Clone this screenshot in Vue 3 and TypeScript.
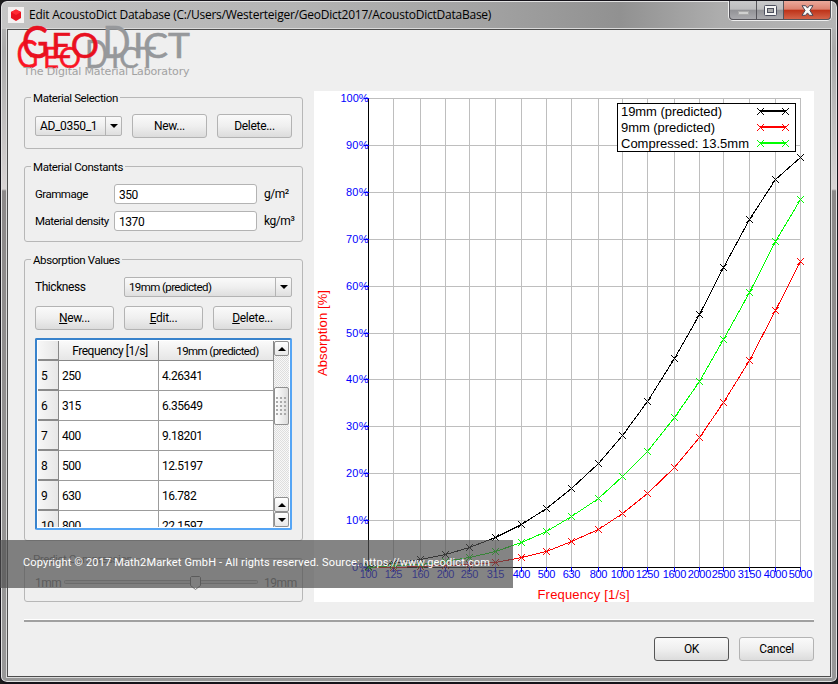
<script setup lang="ts">
interface Series {
  name: string
  color: string
  ys: number[]
}
interface Row {
  n: number
  freq: string
  value: string
}

const rows: Row[] = [
  { n: 5, freq: '250', value: '4.26341' },
  { n: 6, freq: '315', value: '6.35649' },
  { n: 7, freq: '400', value: '9.18201' },
  { n: 8, freq: '500', value: '12.5197' },
  { n: 9, freq: '630', value: '16.782' },
  { n: 10, freq: '800', value: '22.1597' },
]

const freqs = [100, 125, 160, 200, 250, 315, 400, 500, 630, 800, 1000, 1250, 1600, 2000, 2500, 3150, 4000, 5000]
const xs = [368, 393, 420, 445, 469, 495, 521, 546, 571, 598, 622, 647, 674, 699, 723, 749, 775, 800]
const gridYs = [98, 145, 192, 239, 286, 333, 379, 426, 473, 520, 567]

const series: Series[] = [
  {
    name: '19mm (predicted)',
    color: '#000000',
    ys: [566, 563, 559, 554, 547, 537, 524, 508, 488, 463, 435, 401, 358, 314, 267, 219, 179, 157],
  },
  {
    name: '9mm (predicted)',
    color: '#ff0000',
    ys: [567, 567, 566, 565, 564, 562, 557, 551, 541, 529, 513, 493, 467, 437, 402, 360, 310, 261],
  },
  {
    name: 'Compressed: 13.5mm',
    color: '#00ff00',
    ys: [567, 565, 564, 561, 557, 551, 542, 531, 516, 498, 476, 451, 417, 381, 339, 292, 241, 199],
  },
]
const legendWidths = [101, 94, 128]

const points = (s: Series): string => s.ys.map((y, i) => `${xs[i] + 0.5},${y + 0.5}`).join(' ')
const cross = (x: number, y: number): string =>
  `M${x - 3} ${y - 3}L${x + 4} ${y + 4}M${x + 4} ${y - 3}L${x - 3} ${y + 4}`
</script>

<template>
  <div class="window">
    <header class="titlebar">
      <svg class="app-icon" width="16" height="16" viewBox="0 0 16 16">
        <rect width="16" height="16" fill="#f4f1f1" />
        <path d="M8 2.5L13 5v6l-5 3-5-3V5z" fill="#e8121f" />
        <path d="M8 2.5L13 5 8 8 3 5z" fill="#ff2a33" />
      </svg>
      <span class="title">Edit AcoustoDict Database (C:/Users/Westerteiger/GeoDict2017/AcoustoDictDataBase)</span>
      <div class="controls">
        <span class="ctl min"><i></i></span>
        <span class="ctl max">
          <svg width="13" height="11" viewBox="0 0 13 11">
            <rect x="0.5" y="0.5" width="12" height="10" rx="1" fill="#f5f5f5" stroke="#4c4f5e" />
            <rect x="3.5" y="3.5" width="6" height="4" fill="#aaa" stroke="#4c4f5e" />
          </svg>
        </span>
        <span class="ctl close">
          <svg width="13" height="11" viewBox="0 0 13 11">
            <path d="M1 .7h3.6l1.9 2.4L8.400 .7H12L8.900 5.500 12 10.300H8.400L6.500 7.900 4.600 10.300H1L4.100 5.500z" fill="#fafafa" stroke="#4a4654" />
          </svg>
        </span>
      </div>
    </header>

    <main class="client">
      <svg class="logo" width="190" height="54" viewBox="8 24 190 54">
        <g stroke-width="0.4">
          <text x="16.500" y="68" font-size="38" textLength="22" lengthAdjust="spacingAndGlyphs" fill="#fb1424" stroke="#fb1424">G</text>
          <text x="43" y="68" font-size="29" textLength="38" lengthAdjust="spacingAndGlyphs" fill="#fb1424" stroke="#fb1424">EO</text>
          <text x="85" y="68" font-size="38" textLength="23" lengthAdjust="spacingAndGlyphs" fill="#96989b" stroke="#96989b">D</text>
          <text x="111" y="68" font-size="29" textLength="45" lengthAdjust="spacingAndGlyphs" fill="#96989b" stroke="#96989b">ICT</text>
        </g>
        <text x="23.500" y="75" font-size="11" textLength="166" fill="#a2a2a2" class="tagline">The Digital Material Laboratory</text>
        <g stroke-width="0.6">
          <text x="22" y="58" font-size="44" textLength="27" lengthAdjust="spacingAndGlyphs" fill="#e8101f" stroke="#e8101f">G</text>
          <text x="51" y="58" font-size="35" textLength="48" lengthAdjust="spacingAndGlyphs" fill="#e8101f" stroke="#e8101f">EO</text>
          <text x="102.500" y="58" font-size="44" textLength="28" lengthAdjust="spacingAndGlyphs" fill="#96989b" stroke="#96989b">D</text>
          <text x="133" y="58" font-size="35" textLength="57" lengthAdjust="spacingAndGlyphs" fill="#96989b" stroke="#96989b">ICT</text>
        </g>
      </svg>

      <div class="content">
        <div class="left">
          <section class="group selection">
            <h2>Material Selection</h2>
            <div class="line">
              <div class="combo small"><span>AD_0350_1</span><b><i></i></b></div>
              <button>New...</button>
              <button>Delete...</button>
            </div>
          </section>

          <section class="group constants">
            <h2>Material Constants</h2>
            <div class="field"><label>Grammage</label><div class="input">350</div><em>g/m²</em></div>
            <div class="field"><label>Material density</label><div class="input">1370</div><em>kg/m³</em></div>
          </section>

          <section class="group values">
            <h2>Absorption Values</h2>
            <div class="thick">
              <label>Thickness</label>
              <div class="combo wide"><span>19mm (predicted)</span><b><i></i></b></div>
            </div>
            <div class="line actions">
              <button><span><u>N</u>ew...</span></button>
              <button><span><u>E</u>dit...</span></button>
              <button><span><u>D</u>elete...</span></button>
            </div>
            <div class="table">
              <div class="grid">
                <div class="row head">
                  <span class="num"></span><span class="c1">Frequency [1/s]</span><span class="c2">19mm (predicted)</span>
                </div>
                <div v-for="r in rows" :key="r.n" class="row">
                  <span class="num">{{ r.n }}</span><span class="c1">{{ r.freq }}</span><span class="c2">{{ r.value }}</span>
                </div>
              </div>
              <div class="scroll">
                <span class="sb up"><i></i></span>
                <span class="track-a"></span>
                <span class="thumb"><i></i></span>
                <span class="track-b"></span>
                <span class="sb up"><i></i></span>
                <span class="sb down"><i></i></span>
              </div>
            </div>
          </section>

          <section class="group compression">
            <h2>Predict Compression</h2>
            <div class="slider">
              <span class="lo">1mm</span>
              <svg width="196" height="18" viewBox="0 0 196 18">
                <rect x="0.500" y="6.500" width="193" height="3" rx="1" fill="#ddd" stroke="#aaa" />
                <path d="M127.500 2.500h8l1 1v8l-5 4-5-4v-8z" fill="#eee" stroke="#777" />
              </svg>
              <span class="hi">19mm</span>
            </div>
          </section>
        </div>

        <svg class="chart" width="500" height="511" viewBox="314 91 500 511">
          <rect x="314" y="91" width="500" height="511" fill="#fff" />
          <g shape-rendering="crispEdges" fill="none" stroke="#bebebe">
            <path v-for="x in xs" :key="'x' + x" :d="`M${x + 0.5} 98V567`" />
            <path v-for="y in gridYs" :key="'y' + y" :d="`M368 ${y + 0.5}H801`" />
          </g>
          <g fill="#0000ff" font-size="11">
            <text v-for="(y, i) in gridYs" :key="'l' + y" x="368.500" :y="y + 4" text-anchor="end" :textLength="i === 0 ? 28 : i === 10 ? 16.500 : 22.500">{{ 100 - i * 10 }}%</text>
            <text v-for="(f, i) in freqs" :key="f" :x="xs[i] + 0.5" y="578" text-anchor="middle" :textLength="String(f).length * 6 - 0.5">{{ f }}</text>
          </g>
          <g shape-rendering="crispEdges" fill="none">
            <path d="M368.500 98V568M368 567.500H801" stroke="#000" />
            <path v-for="y in gridYs" :key="'t' + y" :d="`M364 ${y + 0.5}H369`" stroke="#00f" />
            <path v-for="x in xs" :key="'u' + x" :d="`M${x + 0.5} 567V572`" stroke="#00f" />
            <g v-for="s in series" :key="s.name" :stroke="s.color">
              <polyline :points="points(s)" />
              <path v-for="(y, i) in s.ys" :key="i" :d="cross(xs[i], y)" />
            </g>
            <rect x="617.500" y="103.500" width="178" height="48" fill="#fff" stroke="#000" />
            <g v-for="(s, i) in series" :key="'g' + i" :stroke="s.color">
              <path :d="`M760 ${111 + i * 16}H786`" stroke-width="2" />
              <path :d="cross(760, 111 + i * 16) + cross(785, 111 + i * 16)" />
            </g>
          </g>
          <g font-size="13" fill="#000">
            <text v-for="(s, i) in series" :key="'n' + i" x="621" :y="116 + i * 16" :textLength="legendWidths[i]">{{ s.name }}</text>
          </g>
          <text x="537.500" y="599" font-size="13" fill="#f00" textLength="92">Frequency [1/s]</text>
          <text transform="translate(327 376) rotate(-90)" font-size="13" fill="#f00" textLength="86">Absorption [%]</text>
        </svg>
      </div>

      <hr />
      <footer>
        <button class="default">OK</button>
        <button>Cancel</button>
      </footer>
    </main>

    <div class="watermark">Copyright © 2017 Math2Market GmbH - All rights reserved. Source: https://www.geodict.com</div>
  </div>
</template>

<style>
body { background: #1c1c1c; overflow: hidden; }
</style>

<style scoped>
* { box-sizing: border-box; }
.window {
  position: relative;
  width: 838px;
  height: 684px;
  padding: 0 6px 5px 5px;
  border: 1px solid #15131a;
  border-bottom-width: 2px;
  border-radius: 7px;
  background:
    linear-gradient(90deg, #c6c6c6 0, #bdbdbd 12%, #b4b4b4 35%, #a2a2a2 58%, #919191 74%, #adadad 86%, #b5b5b5 100%) 0 0 / 100% 28px no-repeat,
    linear-gradient(180deg, #bcbcbc 0, #aaa 50px, #d8d4d4 188px, #8c8989 190px, #989898 100%);
  box-shadow: inset 0 0 0 1px #e2e2e2;
  font-family: Roboto, "Liberation Sans", sans-serif;
  font-size: 12px;
  letter-spacing: -0.45px;
  color: #000;
}
.titlebar { display: flex; height: 27px; padding-left: 2px; }
.app-icon { margin-top: 6px; flex: none; }
.title {
  margin: 5px 0 0 5px;
  width: 500px;
  white-space: nowrap;
  font: 12px/18px "Open Sans", sans-serif;
  letter-spacing: -0.235px;
}
.controls {
  display: flex;
  height: 20px;
  margin-left: auto;
  margin-right: -1px;
  border: 1px solid #eee;
  border-top: 0;
  border-radius: 0 0 5px 5px;
}
.ctl {
  display: flex;
  align-items: center;
  justify-content: center;
  width: 28px;
  border: 1px solid #55545a;
  border-top: 0;
  background: linear-gradient(#c9c9cb 0, #bcbcbe 46%, #929296 50%, #aaaaae 100%);
}
.min { border-radius: 0 0 0 4px; }
.min i { width: 11px; height: 4px; margin-top: 5px; background: #d0d0d0; border: 1px solid #aaa; }
.max { width: 27px; border-left: 0; }
.close { width: 47px; border-left: 0; border-radius: 0 0 4px; background: linear-gradient(#eba99b 0, #dc8270 46%, #bd3218 50%, #d4644a 100%); }

.client {
  display: flex;
  flex-direction: column;
  width: 826px;
  height: 650px;
  padding: 0 15px 15px;
  border: 1px solid #dadada;
  box-shadow: inset 0 0 0 1px #4d4d4d;
  background: #efefef;
}
.logo { display: block; flex: none; margin: -5px 0 0 -14px; font-family: Lato, sans-serif; letter-spacing: 0; overflow: visible; }
.tagline { font-family: "DejaVu Sans", sans-serif; }
.content { display: flex; justify-content: space-between; width: 790px; height: 511px; margin: 13px 0 0 2px; flex: none; }
.chart { font-family: "Liberation Sans", Arial, sans-serif; letter-spacing: 0; }
.left { display: flex; flex-direction: column; width: 279px; padding-top: 6px; }
.group { border: 1px solid #b7b7b7; border-radius: 3px; padding: 0 10px; flex: none; }
h2 { width: max-content; height: 16px; margin: -8px 0 0 -4px; padding: 0 2px; font: inherit; font-size: 11.5px; line-height: 17px; letter-spacing: -0.4px; background: #efefef; }
.selection { height: 52px; }
.constants { height: 76px; margin-top: 17px; }
.values { height: 282px; margin-top: 17px; }
.compression { height: 44px; margin-top: 17px; color: #777; }
.line { display: flex; justify-content: space-between; align-items: center; }
.selection .line { margin-top: 9px; }
.selection .combo { margin-top: -2px; }
button {
  display: flex;
  align-items: center;
  justify-content: center;
  width: 75px;
  height: 24px;
  padding: 0;
  border: 1px solid #b3b3b3;
  border-radius: 3px;
  background: linear-gradient(#fafafa, #efefef 50%, #dcdcdc);
  font: inherit;
  letter-spacing: -0.3px;
  color: inherit;
}
.selection button { margin-top: -1px; }
.actions button { width: 79px; }
.combo {
  display: flex;
  height: 20px;
  border: 1px solid #b3b3b3;
  border-radius: 2px;
  background: linear-gradient(#fafafa, #efefef 50%, #dedede);
  line-height: 18px;
}
.combo span { flex: 1; padding-left: 4px; white-space: nowrap; }
.small span { letter-spacing: -0.35px; }
.wide span { font-size: 11.5px; letter-spacing: -0.6px; }
.combo b { display: flex; align-items: center; justify-content: center; width: 16px; border-left: 1px solid #b3b3b3; }
.combo i { border: 4px solid transparent; border-top-color: #000; border-bottom: 0; }
.small { width: 87px; }
.wide { width: 168px; }
.field { display: flex; align-items: center; height: 20px; margin-bottom: 7px; }
.constants h2 { margin-bottom: 9px; }
.field label { flex: none; width: 79px; white-space: nowrap; font-size: 11.5px; letter-spacing: -0.5px; }
.input { flex: none; width: 143px; height: 20px; padding-left: 4px; border: 1px solid #b3b3b3; border-radius: 3px; background: #fff; line-height: 20px; }
.field em { margin-left: 7px; font-style: normal; white-space: nowrap; }
.thick { display: flex; justify-content: space-between; align-items: center; margin-top: 9px; }
.actions { margin-top: 9px; }
.table { display: flex; width: 257px; height: 192px; margin-top: 8px; padding: 1px; border: 2px solid #55a5f5; border-top-color: #3983cc; border-left-color: #3983cc; border-radius: 2px; background: #fff; }
.grid { flex: 1; overflow: hidden; }
.row { display: flex; height: 30px; }
.row span { display: flex; align-items: center; border-right: 1px solid #9c9c9c; border-bottom: 1px solid #9c9c9c; padding-left: 3px; }
.row .num { width: 21px; background: linear-gradient(90deg, #f7f7f7, #e7e7e7); border-bottom: 2px solid #8a8a8a; border-right-color: #888; padding-top: 1px; }
.c1 { width: 100px; }
.c2 { width: 115px; }
.head { height: 20px; }
.head span { background: linear-gradient(#fafafa, #e6e6e6); justify-content: center; border-color: #888; white-space: nowrap; }
.head .c2 { font-size: 11.5px; letter-spacing: -0.6px; }
.scroll { display: flex; flex-direction: column; width: 15px; background: repeating-conic-gradient(#dedede 0 25%, #f8f8f8 0 50%) 0 0 / 2px 2px; }
.sb { display: flex; align-items: center; justify-content: center; height: 15px; border: 1px solid #909090; border-radius: 2px; background: linear-gradient(#fff, #e8e8e8); }
.sb i { border: 4px solid transparent; }
.up i { border-bottom-color: #000; border-top: 0; }
.down i { border-top-color: #000; border-bottom: 0; }
.track-a { height: 31px; }
.track-b { flex: 1; }
.thumb { display: flex; align-items: center; justify-content: center; height: 38px; border: 1px solid #909090; border-radius: 2px; background: linear-gradient(90deg, #fff, #ddd); }
.thumb i { width: 11px; height: 19px; background: radial-gradient(circle at 1px 1px, #aaa 0 0.9px, transparent 1px) 0 0 / 4px 4px; }
.slider { display: flex; align-items: center; justify-content: space-between; margin-top: 7px; }
.slider svg { margin: 0 3px; flex: none; }
.lo { width: 24px; }
.hi { width: 28px; white-space: nowrap; }
hr { width: 790px; height: 3px; margin: 17px 0 0 2px; border: 0; border-top: 1px solid #fff; background: #a0a0a0; flex: none; }
footer { display: flex; justify-content: flex-end; gap: 10px; width: 790px; margin: 15px 0 0 2px; }
.default { border-color: #555; }
.watermark {
  position: absolute;
  left: -1px;
  top: 539px;
  width: 513px;
  height: 48px;
  padding-left: 23px;
  background: rgba(80, 80, 80, 0.7);
  color: #fff;
  font: 11px/45px Roboto, sans-serif;
  letter-spacing: 0.155px;
  white-space: nowrap;
}
</style>
